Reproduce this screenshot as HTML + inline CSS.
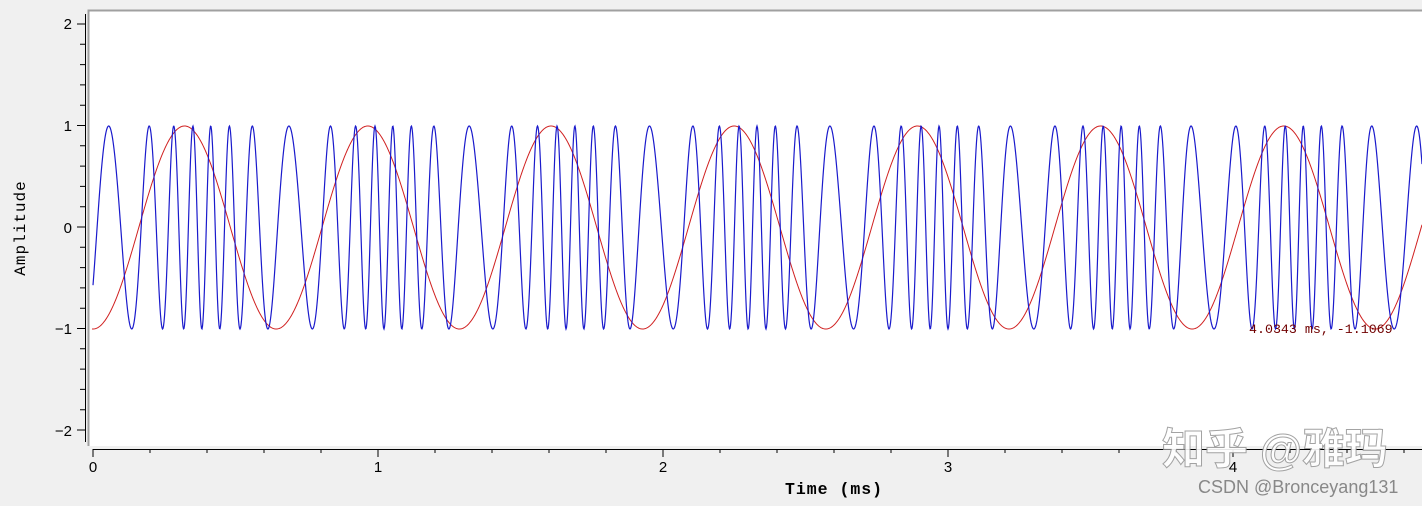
<!DOCTYPE html>
<html><head><meta charset="utf-8"><style>
html,body{margin:0;padding:0;background:#f0f0f0;width:1422px;height:506px;overflow:hidden}
svg{display:block}
</style></head><body>
<svg id="s" width="1422" height="506" xmlns="http://www.w3.org/2000/svg">
<rect x="0" y="0" width="1422" height="506" fill="#f0f0f0"/>
<rect x="88" y="10" width="1340" height="436" fill="#fff"/>
<path d="M88.5 446 V10.5 H1422" fill="none" stroke="#a0a0a0" stroke-width="2"/>
<g id="ax" stroke="#000" stroke-width="1" fill="none"></g>
<g font-family="Liberation Sans, sans-serif" font-size="15" fill="#000">
<text x="72" y="29" text-anchor="end">2</text>
<text x="72" y="131" text-anchor="end">1</text>
<text x="72" y="233" text-anchor="end">0</text>
<text x="72" y="334" text-anchor="end">−1</text>
<text x="72" y="436" text-anchor="end">−2</text>
<text x="93" y="472" text-anchor="middle">0</text>
<text x="378" y="472" text-anchor="middle">1</text>
<text x="663" y="472" text-anchor="middle">2</text>
<text x="948" y="472" text-anchor="middle">3</text>
<text x="1233" y="472" text-anchor="middle">4</text>
</g>
<text transform="translate(25,228) rotate(-90)" text-anchor="middle" font-family="Liberation Mono, monospace" font-size="16" letter-spacing="1" fill="#000">Amplitude</text>
<text x="834" y="494" text-anchor="middle" font-family="Liberation Mono, monospace" font-weight="bold" font-size="16.5" letter-spacing="1" fill="#000">Time (ms)</text>
<path id="red" fill="none" stroke="#d02020" stroke-width="1"/>
<path id="blue" fill="none" stroke="#1a1acc" stroke-width="1.2"/>
<text x="1249" y="333" font-family="Liberation Mono, monospace" font-size="13.3" fill="#700000">4.0343 ms, -1.1069</text>
<text x="1162" y="464" font-family="'Liberation Sans','Noto Sans CJK SC',sans-serif" font-size="43" font-weight="bold" fill="#fff" stroke="#9a9a9a" stroke-width="1" opacity="0.9">知乎 @雅玛</text>
<text x="1198" y="493" font-family="'Liberation Sans',sans-serif" font-size="18" fill="#888">CSDN @Bronceyang131</text>
</svg>
<script>
var ax=document.getElementById('ax'),d='M85.5 14 V442 M93 449.5 H1422';
for(var i=0;i<=20;i++){var y=24+i*20.3;d+='M'+(i%5==0?77:80)+' '+y.toFixed(1)+' H85';}
for(var i=0;i<=23;i++){var x=93+i*57;if(x>1420)break;d+='M'+x+' 449 V'+(i%5==0?457:453);}
ax.innerHTML='<path d="'+d+'"/>';
var P=183.2,y0=227.5,A=101.5,TW=2*Math.PI;
var r='',b='';
for(var x=92;x<=1422;x+=0.5){var v=-Math.cos(TW*(x-93)/P);r+=(r?'L':'M')+x+' '+(y0-A*v).toFixed(2);}
document.getElementById('red').setAttribute('d',r);
var pk=[108.7,149.7,174.7,194,211.3,230.3,252.3,289,329,355.7,375,393,411,434,616,650.3,694,719.3,739.3,757.3,775.7,797.3,830.7,875,901.7,920.7,939.3,958.3,980,1056.7,1083.7,1103,1120.7,1139,1160,1192,1236.7,1265.3,1285,1303,1321.7,1341.7,1373.3,1420];
var x0=108.7;
function phi(x,fc,dev,lag){return TW*fc*(x-x0)-dev*P*(Math.sin(TW*(x-93-lag)/P)-Math.sin(TW*(x0-93-lag)/P));}
var best=[1e9,0.0399,0.0172,18];
for(var fc=0.036;fc<=0.043;fc+=0.00005)for(var dev=0.012;dev<=0.021;dev+=0.0005)for(var lag=0;lag<=36;lag+=1){
var e=0;for(var k=0;k<pk.length;k++)e+=1-Math.cos(phi(pk[k],fc,dev,lag));
if(e<best[0])best=[e,fc,dev,lag];}
for(var x=93;x<=1422;x+=0.5){var v=Math.cos(phi(x,best[1],best[2],best[3]));b+=(b?'L':'M')+x+' '+(y0-A*v).toFixed(2);}
document.getElementById('blue').setAttribute('d',b);
</script>
</body></html>
